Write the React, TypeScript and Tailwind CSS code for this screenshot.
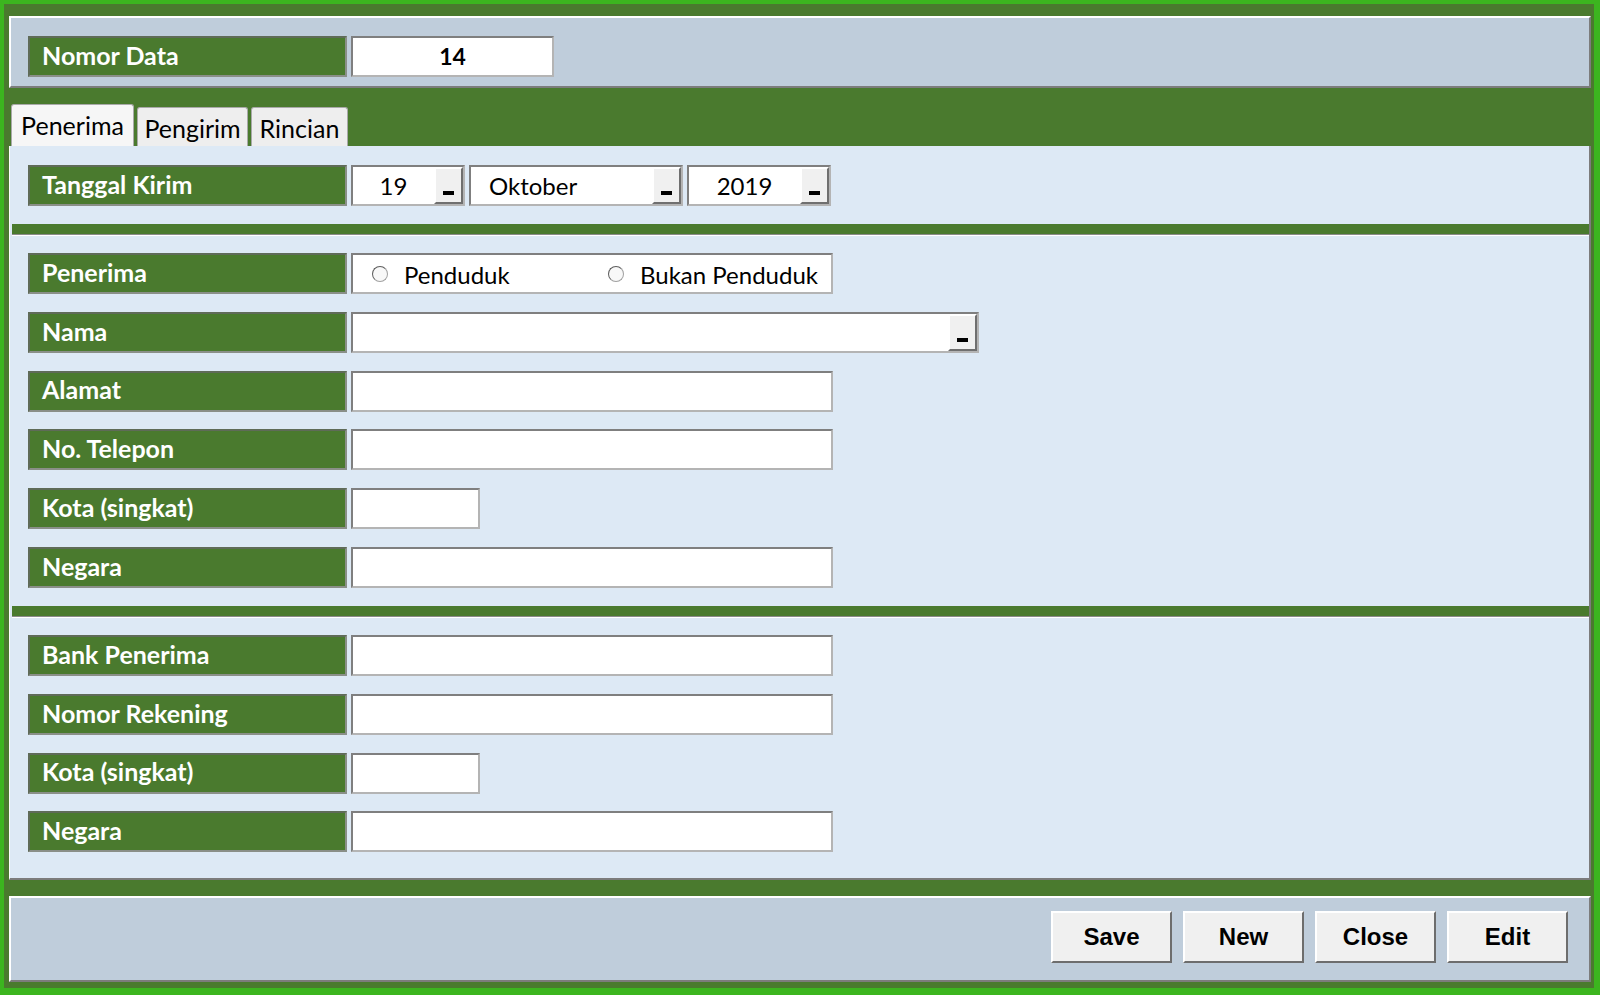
import React from "react";

const calibri = { fontFamily: "Lato, 'Open Sans', sans-serif" };

function Label({ text }: { text: string }) {
  return (
    <div className="flex h-[41px] w-[319px] shrink-0 items-center border-t-2 border-l-2 border-b-2 border-r-2 border-t-[#5f6b58] border-l-[#5f6b58] border-b-[#8a8f88] border-r-[#8a8f88] bg-[#4a7a2e] pb-[2px] pl-[12px] text-[25px] font-bold text-white">
      {text}
    </div>
  );
}

function DropButton() {
  return (
    <div className="flex h-full w-[29px] shrink-0 items-end justify-center border-t-2 border-l-2 border-b-2 border-r-2 border-t-white border-l-white border-b-[#6f6f6f] border-r-[#6f6f6f] bg-[#f0f0f0] pb-[7px]">
      <div className="h-[4px] w-[11px] bg-black" />
    </div>
  );
}

function Box({
  width,
  children,
  className = "",
}: {
  width: string;
  children?: React.ReactNode;
  className?: string;
}) {
  return (
    <div
      className={`flex h-[41px] items-center border-t-2 border-l-2 border-b-2 border-r-2 border-t-[#7f7f7f] border-l-[#7f7f7f] border-b-[#b4b4b4] border-r-[#b4b4b4] bg-white ${width} ${className}`}
    >
      {children}
    </div>
  );
}

function Row({ label, children }: { label: string; children?: React.ReactNode }) {
  return (
    <div className="flex items-center gap-[4px]">
      <Label text={label} />
      {children}
    </div>
  );
}

function Radio({ label }: { label: string }) {
  return (
    <div className="flex items-center gap-[16px]">
      <div className="h-[16px] w-[16px] rounded-full border border-[#a0a0a0] border-l-[#5c5c5c] border-t-[#5c5c5c] bg-[#f8f8f8]" />
      <span className="pt-[3px] text-[24px] text-black">{label}</span>
    </div>
  );
}

function Separator() {
  return (
    <div className="ml-[2px] flex flex-col">
      <div className="h-[10px] bg-[#4a7a2e]" />
      <div className="h-[1px] bg-[#8a8a8a]" />
      <div className="h-[1px] bg-white" />
    </div>
  );
}

function ActionButton({ text }: { text: string }) {
  return (
    <button
      className="h-[52px] w-[121px] border-t-2 border-l-2 border-b-2 border-r-2 border-t-white border-l-white border-b-[#6d6d6d] border-r-[#6d6d6d] bg-[#f0f0f0] text-[24px] font-bold text-black"
      style={{ fontFamily: "'Liberation Sans', Arial, sans-serif" }}
    >
      {text}
    </button>
  );
}

export default function App() {
  return (
    <div
      className="h-[995px] w-[1600px] bg-[#3cb51f] pt-[4px] pl-[4px] pr-[6px] pb-[7px]"
      style={calibri}
    >
      <div className="flex h-full flex-col bg-[#4a7a2e] pl-[5px] pr-[3px]">
        {/* header panel */}
        <div className="mt-[12px] h-[72px] border-t-2 border-l-2 border-b-2 border-r-2 border-t-white border-l-white border-b-[#7c7c7c] border-r-[#7c7c7c] bg-[#bfcddb] pl-[17px] pt-[18px]">
          <div className="flex items-center gap-[4px]">
            <Label text="Nomor Data" />
            <Box width="w-[203px]" className="justify-center">
              <span className="text-[23px] font-bold text-black">14</span>
            </Box>
          </div>
        </div>

        {/* tabs */}
        <div className="mt-[16px] flex h-[42px] items-end pl-[2px]">
          <div className="flex h-[42px] w-[123px] items-center justify-center rounded-t-[3px] border-t border-l border-r border-[#a9a9a9] bg-[#f6f6f6] text-[25px] text-black">
            Penerima
          </div>
          <div className="ml-[3px] flex h-[39px] w-[111px] items-center justify-center rounded-t-[3px] border-t border-l border-r border-[#a9a9a9] bg-[#eeeeee] pt-[3px] text-[25px] text-black">
            Pengirim
          </div>
          <div className="ml-[3px] flex h-[39px] w-[97px] items-center justify-center rounded-t-[3px] border-t border-l border-r border-[#a9a9a9] bg-[#eeeeee] pt-[3px] text-[25px] text-black">
            Rincian
          </div>
        </div>

        {/* main panel */}
        <div className="flex h-[734px] flex-col border-b-2 border-r-2 border-l border-b-[#7c7c7c] border-r-[#7c7c7c] border-l-white bg-[#dde9f5] pt-[19px]">
          <div className="pl-[18px]">
            <Row label="Tanggal Kirim">
              <Box width="w-[114px]" className="justify-between">
                <span className="w-full text-center text-[24px] text-black">19</span>
                <DropButton />
              </Box>
              <Box width="w-[214px]" className="justify-between">
                <span className="pl-[18px] text-[24px] text-black">Oktober</span>
                <DropButton />
              </Box>
              <Box width="w-[144px]" className="justify-between">
                <span className="w-full text-center text-[24px] text-black">2019</span>
                <DropButton />
              </Box>
            </Row>
          </div>

          <div className="mt-[18px]">
            <Separator />
          </div>

          <div className="mt-[17px] flex flex-col gap-[17.8px] pl-[18px]">
            <Row label="Penerima">
              <Box width="w-[482px]">
                <div className="flex w-full items-center pl-[19px]">
                  <div className="w-[236px]">
                    <Radio label="Penduduk" />
                  </div>
                  <Radio label="Bukan Penduduk" />
                </div>
              </Box>
            </Row>
            <Row label="Nama">
              <Box width="w-[628px]" className="justify-end">
                <DropButton />
              </Box>
            </Row>
            <Row label="Alamat">
              <Box width="w-[482px]" />
            </Row>
            <Row label="No. Telepon">
              <Box width="w-[482px]" />
            </Row>
            <Row label="Kota (singkat)">
              <Box width="w-[129px]" />
            </Row>
            <Row label="Negara">
              <Box width="w-[482px]" />
            </Row>
          </div>

          <div className="mt-[18px]">
            <Separator />
          </div>

          <div className="mt-[17px] flex flex-col gap-[17.8px] pl-[18px]">
            <Row label="Bank Penerima">
              <Box width="w-[482px]" />
            </Row>
            <Row label="Nomor Rekening">
              <Box width="w-[482px]" />
            </Row>
            <Row label="Kota (singkat)">
              <Box width="w-[129px]" />
            </Row>
            <Row label="Negara">
              <Box width="w-[482px]" />
            </Row>
          </div>
        </div>

        {/* footer panel */}
        <div className="mt-[16px] flex h-[86px] items-start justify-end gap-[11px] border-t-2 border-l-2 border-b-2 border-r-2 border-t-white border-l-white border-b-[#7c7c7c] border-r-[#7c7c7c] bg-[#bfcddb] pr-[21px] pt-[13px]">
          <ActionButton text="Save" />
          <ActionButton text="New" />
          <ActionButton text="Close" />
          <ActionButton text="Edit" />
        </div>
      </div>
    </div>
  );
}
